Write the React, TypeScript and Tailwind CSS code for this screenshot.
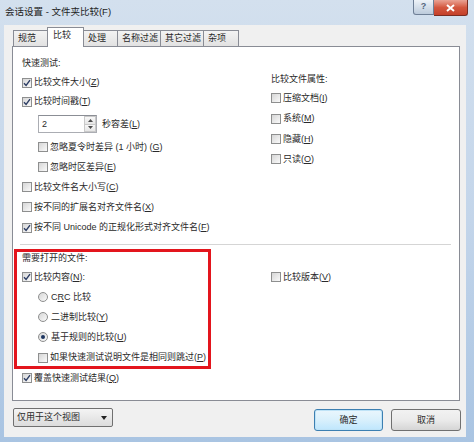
import type { ReactNode } from 'react'
import clsx from 'clsx'

function Box({ on }: { on?: boolean }) {
    return (
        <span className="relative flex h-[10px] w-[10px] shrink-0 items-center justify-center border border-[#8e8f8f] bg-gradient-to-br from-[#d6d6d6] to-[#fafafa]">
            {on && (
                <svg width="8" height="8" viewBox="0 0 8 8" className="absolute">
                    <path d="M1 4.2 L3.1 6.4 L7 1.2" fill="none" stroke="#2b3c63" strokeWidth="1.4" />
                </svg>
            )}
        </span>
    )
}

function Radio({ on }: { on?: boolean }) {
    return (
        <span className="flex h-[10px] w-[10px] shrink-0 items-center justify-center rounded-full border border-[#8e8f8f] bg-gradient-to-br from-[#d6d6d6] to-[#fafafa]">
            {on && <span className="h-[4px] w-[4px] rounded-full bg-[#1d3560]" />}
        </span>
    )
}

function Row({ on, radio, className, children }: { on?: boolean; radio?: boolean; className?: string; children: ReactNode }) {
    return (
        <div className={clsx('flex items-center gap-[2px] leading-none', className)}>
            {radio ? <Radio on={on} /> : <Box on={on} />}
            <span className={radio ? 'ml-[1px]' : ''}>{children}</span>
        </div>
    )
}

const tabs = ['规范', '比较', '处理', '名称过滤', '其它过滤', '杂项']
const tabWidths = ['w-[35px]', 'w-[37px]', 'w-[35px]', 'w-[44px]', 'w-[44px]', 'w-[36px]']

export default function App() {
    return (
        <div className="flex h-[442px] w-[474px] flex-col bg-gradient-to-b from-[#d3e0ee] via-[#c3d5ea] to-[#a9c4e2] font-['Liberation_Sans','Noto_Sans_CJK_SC',sans-serif] text-[9px] text-[#2a2a2a]">
            {/* title bar */}
            <div className="flex h-[25px] items-start justify-between pl-[5px] pr-[6px]">
                <div className="flex h-[25px] items-center text-[9.5px] text-[#222]">会话设置 - 文件夹比较(F)</div>
                <div className="flex">
                    <div className="flex h-[15px] w-[21px] items-center justify-center rounded-bl-[3px] border border-t-0 border-[#6e7f96] bg-gradient-to-b from-[#eef3f8] to-[#bccbdc] text-[9px] font-bold text-[#55657c]">?</div>
                    <div className="flex h-[16px] w-[34px] items-center justify-center rounded-br-[3px] border border-t-0 border-l-0 border-[#7a2d22] bg-gradient-to-b from-[#e9a294] via-[#d3573f] to-[#c4402a]">
                        <svg width="9" height="8" viewBox="0 0 9 8">
                            <path d="M1 1 L8 7 M8 1 L1 7" stroke="#fff" strokeWidth="2" />
                        </svg>
                    </div>
                </div>
            </div>

            {/* client area */}
            <div className="ml-[4px] mr-[8px] flex h-[412px] flex-col bg-[#f0f0f0]">
                <div className="mt-[2px] flex h-[19px] items-end pl-[9px]">
                    {tabs.map((t, i) =>
                        i === 1 ? (
                            <div key={t} className={clsx(tabWidths[i], 'relative z-10 -mb-px h-[20px] border border-b-0 border-[#898c95] bg-white pl-[5px] pt-[3px] leading-none')}>
                                {t}
                            </div>
                        ) : (
                            <div key={t} className={clsx(tabWidths[i], 'h-[16px] border border-b-0 border-[#898c95] bg-gradient-to-b from-[#f3f3f3] to-[#e2e2e2] pl-[4px] pt-[3px] leading-none', i > 1 && '-ml-px', i === 0 && '-mr-px')}>
                                {t}
                            </div>
                        )
                    )}
                </div>

                {/* tab panel */}
                <div className="relative ml-[8px] h-[355px] w-[448px] border border-[#898c95] bg-white pl-[9px] pt-[7px]">
                    <div className="flex">
                        <div className="flex w-[249px] flex-col">
                            <div className="flex h-[19px] items-center leading-none">快速测试:</div>
                            <Row on className="h-[19px]">比较文件大小(<u>Z</u>)</Row>
                            <Row on className="h-[19px]">比较时间戳(<u>T</u>)</Row>
                            <div className="mt-[2px] flex h-[22px] items-center pl-[16px] leading-none">
                                <div className="flex h-[18px] w-[59px] border border-[#abadb3] border-t-[#8b8e95] bg-white">
                                    <span className="flex flex-1 items-center pl-[3px]">2</span>
                                    <div className="flex w-[12px] flex-col">
                                        <div className="flex flex-1 items-center justify-center border border-[#c9c9c9] bg-gradient-to-b from-[#f8f8f8] to-[#e6e6e6]">
                                            <svg width="5" height="3" viewBox="0 0 5 3"><path d="M0 3 L2.5 0 L5 3Z" fill="#4d4d4d" /></svg>
                                        </div>
                                        <div className="flex flex-1 items-center justify-center border border-t-0 border-[#c9c9c9] bg-gradient-to-b from-[#f8f8f8] to-[#e6e6e6]">
                                            <svg width="5" height="3" viewBox="0 0 5 3"><path d="M0 0 L2.5 3 L5 0Z" fill="#4d4d4d" /></svg>
                                        </div>
                                    </div>
                                </div>
                                <span className="ml-[5px]">秒容差(<u>L</u>)</span>
                            </div>
                            <Row className="mt-[2px] h-[20px] pl-[16px]">忽略夏令时差异 (1 小时) (<u>G</u>)</Row>
                            <Row className="h-[20px] pl-[16px]">忽略时区差异(<u>E</u>)</Row>
                            <Row className="h-[20px]">比较文件名大小写(<u>C</u>)</Row>
                            <Row className="h-[20px]">按不同的扩展名对齐文件名(<u>X</u>)</Row>
                            <Row on className="h-[21px]">按不同 Unicode 的正规化形式对齐文件名(<u>F</u>)</Row>
                        </div>
                        <div className="flex flex-col pt-[17px]">
                            <div className="flex h-[17px] items-center leading-none">比较文件属性:</div>
                            <Row className="h-[20px]">压缩文档(<u>I</u>)</Row>
                            <Row className="h-[21px]">系统(<u>M</u>)</Row>
                            <Row className="h-[20px]">隐藏(<u>H</u>)</Row>
                            <Row className="h-[20px]">只读(<u>O</u>)</Row>
                        </div>
                    </div>

                    <div className="-ml-[2px] mt-[6px] h-px w-[431px] bg-[#d5d5d5]" />

                    <div className="mt-[4px] flex">
                        <div className="flex w-[249px] flex-col">
                            <div className="flex h-[18px] items-center leading-none">需要打开的文件:</div>
                            <Row on className="h-[20px]">比较内容(<u>N</u>):</Row>
                            <Row radio className="h-[20px] pl-[16px]">C<u>R</u>C 比较</Row>
                            <Row radio className="h-[20px] pl-[16px]">二进制比较(<u>Y</u>)</Row>
                            <Row radio on className="h-[20px] pl-[16px]">基于规则的比较(<u>U</u>)</Row>
                            <Row className="h-[21px] pl-[16px]">如果快速测试说明文件是相同则跳过(<u>P</u>)</Row>
                            <Row on className="h-[20px]">覆盖快速测试结果(<u>Q</u>)</Row>
                        </div>
                        <div className="flex flex-col pt-[18px]">
                            <Row className="h-[20px]">比较版本(<u>V</u>)</Row>
                        </div>
                    </div>

                    {/* red annotation frame */}
                    <div className="absolute left-[1px] top-[202px] h-[120px] w-[197px] border-[3px] border-[#e3151d]" />
                </div>

                {/* bottom buttons */}
                <div className="mt-[7px] flex items-start pl-[9px] pr-[5px] leading-none">
                    <div className="flex h-[19px] w-[100px] items-center justify-between rounded-[2px] border border-[#707070] bg-gradient-to-b from-[#f4f4f4] to-[#dcdcdc] pl-[3px] pr-[5px]">
                        <span>仅用于这个视图</span>
                        <svg width="6" height="4" viewBox="0 0 6 4"><path d="M0 0 L3 4 L6 0Z" fill="#222" /></svg>
                    </div>
                    <div className="flex-1" />
                    <div className="mt-[1px] flex h-[22px] w-[69px] items-center justify-center rounded-[3px] border border-[#3c7fb1] bg-gradient-to-b from-[#eaf6fd] via-[#d9f0fc] to-[#bee6fd] shadow-[inset_0_0_0_1px_#bfe3f7]">确定</div>
                    <div className="ml-[8px] mt-[1px] flex h-[22px] w-[70px] items-center justify-center rounded-[3px] border border-[#707070] bg-gradient-to-b from-[#f2f2f2] via-[#ebebeb] to-[#d5d5d5]">取消</div>
                </div>
            </div>
        </div>
    )
}
